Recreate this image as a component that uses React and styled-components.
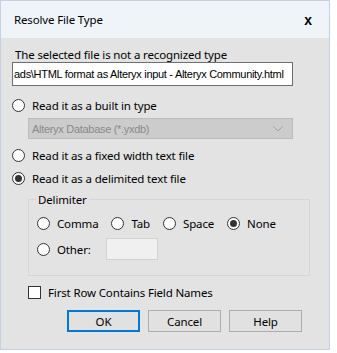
import React from 'react';
import styled, { createGlobalStyle } from 'styled-components';

const GlobalStyle = createGlobalStyle`
  html, body {
    margin: 0;
    padding: 0;
    background: #ffffff;
  }
  body {
    font-family: 'Noto Sans', 'Open Sans', sans-serif;
    font-size: 11.5px;
    letter-spacing: -0.15px;
    color: #000;
  }
`;

const Window = styled.div`
  width: 328px;
  height: 348px;
  border: 1px solid #c5d1e2;
  display: flex;
  flex-direction: column;
  background: #e3e3e3;
`;

const TitleBar = styled.div`
  height: 37px;
  flex: none;
  background: #eff4f9;
  display: flex;
  align-items: center;
  justify-content: space-between;
  padding: 0 17px 0 13px;
`;

const CloseMark = styled.span`
  font-family: 'Liberation Sans', Arial, sans-serif;
  font-weight: bold;
  font-size: 14px;
  line-height: 1;
`;

const Body = styled.div`
  flex: 1;
  padding: 9px 0 0 11px;
  display: flex;
  flex-direction: column;
`;

const Caption = styled.div`
  line-height: 15px;
  padding-left: 3px;
`;

const PathField = styled.div`
  width: 278px;
  height: 22px;
  border: 1px solid #6e6e6e;
  background: #ffffff;
  display: flex;
  align-items: center;
  overflow: hidden;
  white-space: nowrap;
  padding-left: 1px;
  font-family: 'Liberation Sans', Arial, sans-serif;
  font-size: 11px;
  letter-spacing: -0.3px;
`;

const OptionRow = styled.label`
  display: flex;
  align-items: center;
  height: 16px;
  margin-top: ${p => p.$top || 0}px;
  margin-left: ${p => p.$indent || 0}px;
  gap: 7px;
  white-space: nowrap;
`;

const RadioDot = styled.span`
  width: 11px;
  height: 11px;
  flex: none;
  border: 1px solid #333;
  border-radius: 50%;
  background: #fff;
  display: flex;
  align-items: center;
  justify-content: center;

  &::after {
    content: '';
    width: 7px;
    height: 7px;
    border-radius: 50%;
    background: #333;
    display: ${p => (p.$checked ? 'block' : 'none')};
  }
`;

const CheckBox = styled.span`
  width: 11px;
  height: 11px;
  flex: none;
  border: 1px solid #333;
  background: #fff;
`;

const Combo = styled.div`
  margin: 5px 0 0 16px;
  width: 251px;
  height: 19px;
  border: 1px solid #bcbcbc;
  background: #cccccc;
  display: flex;
  align-items: center;
  justify-content: space-between;
  padding: 0 9px 0 3px;
  color: #8a8a8a;
  font-family: 'Liberation Sans', Arial, sans-serif;
  font-size: 11px;
  letter-spacing: -0.3px;
`;

const Group = styled.fieldset`
  margin: 6px 0 0 16px;
  width: 282px;
  height: 84px;
  box-sizing: border-box;
  border: 1px solid #d6d6d6;
  padding: 0 0 0 8px;
  min-width: 0;
`;

const Legend = styled.legend`
  padding: 0 2px;
  margin-left: -1px;
  line-height: 15px;
`;

const RadioLine = styled.div`
  display: flex;
  align-items: center;
  height: ${p => p.$height || 16}px;
  gap: ${p => p.$gap || 13}px;
  margin-top: ${p => p.$top || 0}px;
`;

const SmallInput = styled.div`
  width: 50px;
  height: 20px;
  border: 1px solid #d2d2d2;
  background: #f0f0f0;
`;

const ButtonRow = styled.div`
  display: flex;
  gap: 8px;
  margin: 10px 0 0 55px;
`;

const Button = styled.div`
  width: 73px;
  height: 22px;
  box-sizing: border-box;
  border: ${p => (p.$primary ? '2px solid #0078d7' : '1px solid #adadad')};
  background: #e1e1e1;
  display: flex;
  align-items: center;
  justify-content: center;
`;

const Chevron = () => (
  <svg width="10" height="6" viewBox="0 0 10 6">
    <path d="M0.5 0.5 L5 5 L9.5 0.5" fill="none" stroke="#a0a0a0" strokeWidth="1" />
  </svg>
);

const Radio = ({ checked, children, ...rest }) => (
  <OptionRow {...rest}>
    <RadioDot $checked={checked} />
    {children}
  </OptionRow>
);

export default function App() {
  return (
    <>
      <GlobalStyle />
      <Window>
        <TitleBar>
          <span>Resolve File Type</span>
          <CloseMark>x</CloseMark>
        </TitleBar>
        <Body>
          <Caption>The selected file is not a recognized type</Caption>
          <PathField>ads\HTML format as Alteryx input - Alteryx Community.html</PathField>

          <Radio $top={11}>Read it as a built in type</Radio>
          <Combo>
            <span>Alteryx Database (*.yxdb)</span>
            <Chevron />
          </Combo>
          <Radio $top={8}>Read it as a fixed width text file</Radio>
          <Radio $top={7} checked>Read it as a delimited text file</Radio>

          <Group>
            <Legend>Delimiter</Legend>
            <RadioLine $top={8}>
              <Radio>Comma</Radio>
              <Radio>Tab</Radio>
              <Radio>Space</Radio>
              <Radio checked>None</Radio>
            </RadioLine>
            <RadioLine $top={7} $height={22} $gap={15}>
              <Radio>Other:</Radio>
              <SmallInput />
            </RadioLine>
          </Group>

          <OptionRow $top={8} $indent={16}>
            <CheckBox />
            First Row Contains Field Names
          </OptionRow>

          <ButtonRow>
            <Button $primary>OK</Button>
            <Button>Cancel</Button>
            <Button>Help</Button>
          </ButtonRow>
        </Body>
      </Window>
    </>
  );
}
